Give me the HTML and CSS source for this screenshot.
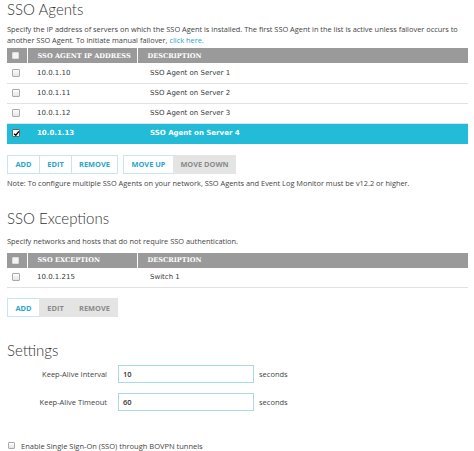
FILE: index.html
```html
<!DOCTYPE html>
<html>
<head>
<meta charset="utf-8">
<link rel="stylesheet" href="styles.css">
</head>
<body>
<div class="page">
  <section class="sec sec-agents">
    <h2 class="title">SSO Agents</h2>
    <p class="desc">Specify the IP address of servers on which the SSO Agent is installed. The first SSO Agent in the list is active unless failover occurs to another SSO Agent. To initiate manual failover, <a class="link">click here.</a></p>
    <table class="grid">
      <thead>
        <tr><th class="c-chk"><span class="cb cb-head"></span></th><th class="c-ip">SSO AGENT IP ADDRESS</th><th>DESCRIPTION</th></tr>
      </thead>
      <tbody>
        <tr><td class="c-chk"><span class="cb"></span></td><td class="c-ip">10.0.1.10</td><td>SSO Agent on Server 1</td></tr>
        <tr><td class="c-chk"><span class="cb"></span></td><td class="c-ip">10.0.1.11</td><td>SSO Agent on Server 2</td></tr>
        <tr><td class="c-chk"><span class="cb"></span></td><td class="c-ip">10.0.1.12</td><td>SSO Agent on Server 3</td></tr>
        <tr class="sel"><td class="c-chk"><span class="cb cb-on"><svg viewBox="0 0 8 8" width="7" height="7"><path d="M1.3 4.2 L3.2 6 L6.8 1.6" fill="none" stroke="#000" stroke-width="1.6"/></svg></span></td><td class="c-ip">10.0.1.13</td><td>SSO Agent on Server 4</td></tr>
      </tbody>
    </table>
    <div class="btnbar">
      <div class="btngroup">
        <span class="btn b-add">ADD</span><span class="btn b-edit">EDIT</span><span class="btn b-remove">REMOVE</span>
      </div>
      <div class="btngroup">
        <span class="btn b-up">MOVE UP</span><span class="btn b-down off">MOVE DOWN</span>
      </div>
    </div>
    <p class="note">Note: To configure multiple SSO Agents on your network, SSO Agents and Event Log Monitor must be v12.2 or higher.</p>
  </section>

  <section class="sec sec-exc">
    <h2 class="title">SSO Exceptions</h2>
    <p class="desc">Specify networks and hosts that do not require SSO authentication.</p>
    <table class="grid">
      <thead>
        <tr><th class="c-chk"><span class="cb cb-head"></span></th><th class="c-ip">SSO EXCEPTION</th><th>DESCRIPTION</th></tr>
      </thead>
      <tbody>
        <tr><td class="c-chk"><span class="cb"></span></td><td class="c-ip">10.0.1.215</td><td>Switch 1</td></tr>
      </tbody>
    </table>
    <div class="btnbar">
      <div class="btngroup">
        <span class="btn b-add">ADD</span><span class="btn b-edit off">EDIT</span><span class="btn b-remove off">REMOVE</span>
      </div>
    </div>
  </section>

  <section class="sec sec-settings">
    <h2 class="title">Settings</h2>
    <div class="field">
      <label class="flabel">Keep-Alive Interval</label>
      <span class="finput">10</span>
      <span class="funit">seconds</span>
    </div>
    <div class="field">
      <label class="flabel">Keep-Alive Timeout</label>
      <span class="finput">60</span>
      <span class="funit">seconds</span>
    </div>
    <div class="checkrow">
      <span class="cb"></span>
      <span class="checklabel">Enable Single Sign-On (SSO) through BOVPN tunnels</span>
    </div>
  </section>
</div>
</body>
</html>
```

FILE: styles.css
```css
* { box-sizing: border-box; }
html, body { margin: 0; padding: 0; background: #fff; }
body { font-family: "Open Sans", "Liberation Sans", sans-serif; color: #444; }
.page { padding: 1px 6px 0 7px; width: 474px; }

.title {
  font-family: Lato, "Open Sans", sans-serif;
  font-weight: 300;
  font-size: 15px;
  color: #333;
  margin: 0;
  line-height: 16px;
  height: 16px;
}

.desc {
  margin: 7px 0 0;
  font-size: 7.4px;
  line-height: 11px;
  color: #444;
}
.sec-exc .desc { margin-top: 10px; }
.link { color: #2aa6c8; }

.grid {
  width: 100%;
  border-collapse: collapse;
  margin-top: 2px;
  font-family: "DejaVu Sans", Verdana, sans-serif;
  font-size: 7px;
}
.sec-exc .grid { margin-top: 6px; }
.grid th {
  background: #9a9a9a;
  color: #fff;
  font-family: "DejaVu Serif", Georgia, serif;
  font-weight: bold;
  font-size: 6.6px;
  text-align: left;
  height: 15px;
  padding: 0 0 0 10px;
  border-left: 1px solid #fff;
  border-right: 1px solid #fff;
}
.grid th:first-child { border-left: 0; }
.grid th:last-child { border-right: 0; }
.grid .c-chk { width: 20px; padding: 0 0 0 5px; }
.grid .c-ip { width: 110px; }
.grid td {
  height: 20px;
  padding: 0 0 0 10px;
  color: #3a3a3a;
  border-bottom: 1px solid #e2e2e2;
}
.grid td:nth-child(3) { padding-left: 13px; }
.grid tr.sel td { background: #22bcd8; color: #fff; font-weight: bold; border-bottom-color: #22bcd8; }

.cb {
  display: inline-block;
  width: 8px;
  height: 8px;
  border: 1px solid #aaa;
  border-radius: 1px;
  background: linear-gradient(#fff, #e4e4e4);
  vertical-align: middle;
}
.cb-head { background: #f4f4f4; border-color: #ddd; width: 7px; height: 7px; }
.cb-on { background: #fff; border-color: #666; }
.cb-on svg { display: block; }

.btnbar { display: flex; gap: 5px; margin-top: 11px; }
.sec-exc .btnbar { margin-top: 10px; }
.btngroup { display: flex; }
.btn {
  display: inline-flex;
  align-items: center;
  justify-content: center;
  height: 19px;
  border: 1px solid #c9e6ee;
  background: #fff;
  color: #2aa6c8;
  font-weight: 700;
  font-size: 7.4px;
  margin-left: -1px;
}
.btngroup .btn:first-child { margin-left: 0; }
.btn.off { background: #e4e4e4; border-color: #e4e4e4; color: #8a8a8a; }
.b-add { width: 33px; }
.b-edit { width: 33px; }
.b-remove { width: 47px; }
.b-up { width: 51px; }
.b-down { width: 63px; }

.note { margin: 4px 0 0; font-size: 7.4px; line-height: 11px; color: #444; }

.sec-exc { margin-top: 21px; }
.sec-settings { margin-top: 25px; }

.field { display: flex; align-items: center; margin-top: 10px; }
.sec-settings .title + .field { margin-top: 7px; }
.flabel { width: 100px; text-align: right; font-size: 7.5px; color: #444; }
.finput {
  margin-left: 11px;
  width: 136px;
  height: 18px;
  border: 1px solid #a9d9e4;
  font-size: 7.5px;
  font-weight: 600;
  color: #333;
  padding-left: 4px;
  display: flex;
  align-items: center;
}
.funit { margin-left: 5px; font-size: 7.5px; color: #444; }

.checkrow { display: flex; align-items: center; height: 11px; margin-top: 29px; padding-left: 1px; }
.checkrow .cb { width: 7px; height: 7px; }
.checklabel { margin-left: 6px; font-size: 7.5px; color: #444; }
```
